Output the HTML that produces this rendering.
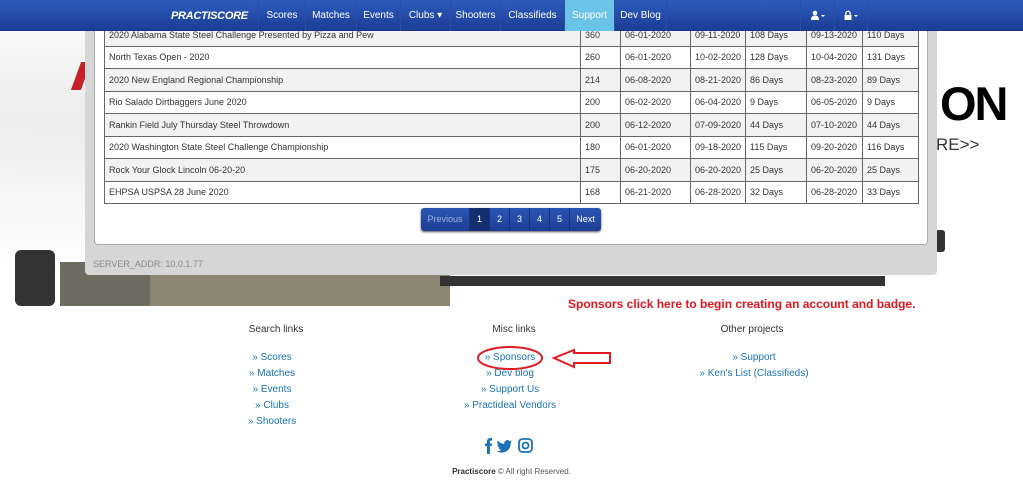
<!DOCTYPE html>
<html><head><meta charset="utf-8"><style>
*{margin:0;padding:0;box-sizing:border-box}
body{width:1023px;height:487px;overflow:hidden;background:#fff;font-family:"Liberation Sans",Arial,sans-serif;position:relative;font-size:9px}
.abs{position:absolute}
.nav{left:0;top:0;width:1023px;height:31px;background:linear-gradient(#2d5cbd,#1c3e95);border-bottom:1px solid #173580}
.nav a{position:absolute;top:0;height:31px;line-height:31px;color:#fff;font-size:10px;text-align:center;border-left:1px solid #2b4fa6}
table{border-collapse:collapse;width:814px;table-layout:fixed}
td{border:1px solid #666;height:22.5px;padding:0 4px;color:#333;font-size:9px;white-space:nowrap;overflow:hidden}
tr.g td{background:#f2f2f2}
.pg{left:421px;top:208px;height:23px;display:flex;border-radius:3px;overflow:hidden;background:linear-gradient(#2b56b4,#1d3f95);box-shadow:0 1px 2px #555}
.pg span{color:#fff;font-size:9px;line-height:23px;text-align:center;border-left:1px solid #16337d}
.f{color:#1a73b5;font-size:10px;text-align:center;width:200px}
.h{color:#333;font-size:10px;text-align:center;width:200px}
</style></head><body>
<div class="abs" style="left:0;top:31px;width:1023px;height:240px;background:radial-gradient(ellipse at 60px 90px,#ececec,#fff 70%)"></div>
<div class="abs" style="left:76px;top:62px;width:10px;height:28px;background:#c5202a;transform:skewX(-20deg)"></div>
<div class="abs" style="left:940px;top:76px;font:bold 47px 'Liberation Sans';color:#000;letter-spacing:-2px">ON</div>
<div class="abs" style="left:936px;top:135px;font:17px 'Liberation Sans';color:#333">RE&gt;&gt;</div>
<div class="abs" style="left:15px;top:250px;width:40px;height:56px;background:#333;border-radius:6px"></div>
<div class="abs" style="left:60px;top:262px;width:95px;height:44px;background:#6e6b60"></div>
<div class="abs" style="left:150px;top:268px;width:300px;height:38px;background:#8b8572"></div>
<div class="abs" style="left:440px;top:276px;width:445px;height:10px;background:#333"></div>
<div class="abs" style="left:935px;top:230px;width:10px;height:22px;background:#333;border-radius:3px"></div>
<div class="abs" style="left:85px;top:31px;width:852px;height:244px;background:#d6d6d6;border-radius:0 0 4px 4px"></div>
<div class="abs" style="left:94px;top:31px;width:834px;height:214px;background:#fff;border:1px solid #aaa;border-top:none;border-radius:0 0 4px 4px"></div>
<div class="abs" style="left:93px;top:259px;color:#8a8a8a;font-size:9px">SERVER_ADDR: 10.0.1.77</div>
<div class="abs" style="left:104px;top:23px">
<table>
<colgroup><col style="width:476px"><col style="width:40px"><col style="width:70px"><col style="width:55px"><col style="width:61px"><col style="width:56px"><col style="width:56px"></colgroup>
<tr class="g"><td>2020 Alabama State Steel Challenge Presented by Pizza and Pew</td><td>360</td><td>06-01-2020</td><td>09-11-2020</td><td>108 Days</td><td>09-13-2020</td><td>110 Days</td></tr>
<tr><td>North Texas Open - 2020</td><td>260</td><td>06-01-2020</td><td>10-02-2020</td><td>128 Days</td><td>10-04-2020</td><td>131 Days</td></tr>
<tr class="g"><td>2020 New England Regional Championship</td><td>214</td><td>06-08-2020</td><td>08-21-2020</td><td>86 Days</td><td>08-23-2020</td><td>89 Days</td></tr>
<tr><td>Rio Salado Dirtbaggers June 2020</td><td>200</td><td>06-02-2020</td><td>06-04-2020</td><td>9 Days</td><td>06-05-2020</td><td>9 Days</td></tr>
<tr class="g"><td>Rankin Field July Thursday Steel Throwdown</td><td>200</td><td>06-12-2020</td><td>07-09-2020</td><td>44 Days</td><td>07-10-2020</td><td>44 Days</td></tr>
<tr><td>2020 Washington State Steel Challenge Championship</td><td>180</td><td>06-01-2020</td><td>09-18-2020</td><td>115 Days</td><td>09-20-2020</td><td>116 Days</td></tr>
<tr class="g"><td>Rock Your Glock Lincoln 06-20-20</td><td>175</td><td>06-20-2020</td><td>06-20-2020</td><td>25 Days</td><td>06-20-2020</td><td>25 Days</td></tr>
<tr><td>EHPSA USPSA 28 June 2020</td><td>168</td><td>06-21-2020</td><td>06-28-2020</td><td>32 Days</td><td>06-28-2020</td><td>33 Days</td></tr>
</table></div>
<div class="abs pg"><span style="width:48px;color:#9fb2dd;border:none">Previous</span><span style="width:20px;background:#142f70">1</span><span style="width:20px">2</span><span style="width:20px">3</span><span style="width:20px">4</span><span style="width:20px">5</span><span style="width:32px">Next</span></div>
<div class="abs nav">
<div class="abs" style="left:171px;top:10px;color:#fff;font:italic bold 11px 'Liberation Sans';letter-spacing:-0.3px">PRACTISCORE</div>
<a style="left:258px;width:47px">Scores</a><a style="left:305px;width:51px">Matches</a><a style="left:356px;width:44px">Events</a><a style="left:400px;width:50px">Clubs ▾</a><a style="left:450px;width:50px">Shooters</a><a style="left:500px;width:64px">Classifieds</a><a style="left:564px;width:50px;background:#6cc3e8">Support</a><a style="left:614px;width:53px;border-right:1px solid #2b4fa6">Dev Blog</a>
<a style="left:800px;width:34px"><svg width="14" height="10" viewBox="0 0 14 10" style="vertical-align:middle"><circle cx="4" cy="3" r="2.3" fill="#fff"/><path d="M0 10 Q0 5.5 4 5.5 Q8 5.5 8 10Z" fill="#fff"/><path d="M10 5h4l-2 2z" fill="#fff"/></svg></a><a style="left:834px;width:34px;border-right:1px solid #2b4fa6"><svg width="14" height="10" viewBox="0 0 14 10" style="vertical-align:middle"><path d="M1.8 5V3.5a2.2 2.2 0 0 1 4.4 0V5" fill="none" stroke="#fff" stroke-width="1.3"/><rect x="0.5" y="5" width="7" height="5" fill="#fff"/><path d="M10 5h4l-2 2z" fill="#fff"/></svg></a>
</div>
<div class="abs" style="left:568px;top:297px;color:#e8161c;font:bold 12px 'Liberation Sans'">Sponsors click here to begin creating an account and badge.</div>
<div class="abs h" style="left:176px;top:324px">Search links</div>
<div class="abs h" style="left:414px;top:324px">Misc links</div>
<div class="abs h" style="left:652px;top:324px">Other projects</div>
<div class="abs f" style="left:172px;top:352px">» Scores</div>
<div class="abs f" style="left:172px;top:368px">» Matches</div>
<div class="abs f" style="left:172px;top:384px">» Events</div>
<div class="abs f" style="left:172px;top:400px">» Clubs</div>
<div class="abs f" style="left:172px;top:416px">» Shooters</div>
<div class="abs f" style="left:410px;top:352px">» Sponsors</div>
<div class="abs f" style="left:410px;top:368px">» Dev blog</div>
<div class="abs f" style="left:410px;top:384px">» Support Us</div>
<div class="abs f" style="left:410px;top:400px">» Practideal Vendors</div>
<div class="abs f" style="left:654px;top:352px">» Support</div>
<div class="abs f" style="left:654px;top:368px">» Ken's List (Classifieds)</div>
<svg class="abs" style="left:470px;top:340px" width="150" height="40"><ellipse cx="40" cy="18" rx="32" ry="11" fill="none" stroke="#e21b22" stroke-width="2"/><path d="M84 18 L104 10 L104 13 L140 13 L140 23 L104 23 L104 27 Z" fill="none" stroke="#e21b22" stroke-width="2"/></svg>
<svg class="abs" style="left:482px;top:437px" width="54" height="18" fill="#1a73b5"><path d="M5 17V9H3V6.5h2V4.5C5 2.5 6 1 8.5 1H10v2.6H9c-1 0-1.1.4-1.1 1.1v1.8H10L9.7 9H7.9v8z"/><path d="M30 4.5c-.6.3-1.2.4-1.8.5.7-.4 1.1-1 1.4-1.7-.6.4-1.300.6-2 .8a3.1 3.1 0 0 0-5.3 2.8C19.7 6.8 17.4 5.5 15.8 3.6c-.9 1.5-.4 3.3 1 4.2-.5 0-1-.2-1.4-.4 0 1.5 1.1 2.8 2.5 3.1-.5.1-1 .2-1.4.1.4 1.3 1.6 2.2 2.9 2.2A6.3 6.3 0 0 1 15 14.1 8.8 8.8 0 0 0 28.6 6.3z"/><rect x="37" y="2" width="13" height="13" rx="3.5" fill="none" stroke="#1a73b5" stroke-width="1.8"/><circle cx="43.5" cy="8.5" r="3" fill="none" stroke="#1a73b5" stroke-width="1.8"/></svg>
<div class="abs" style="left:0;width:1023px;top:467px;text-align:center;color:#555;font-size:8px"><b style="color:#333">Practiscore</b> © All right Reserved.</div>
</body></html>
